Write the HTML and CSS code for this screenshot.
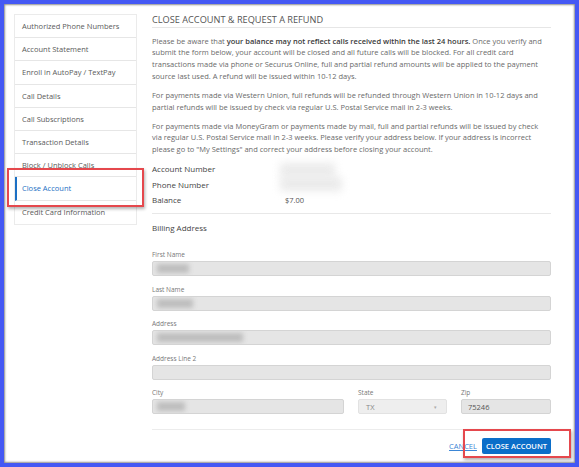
FILE: index.html
```html
<!DOCTYPE html>
<html lang="en">

  <head>
    <meta charset="UTF-8">
    <title>Close Account</title>
    <link rel="stylesheet" href="styles.css">
  </head>

  <body>
    <div class="frame">
      <ul class="side-nav">
        <li>Authorized Phone Numbers</li>
        <li>Account Statement</li>
        <li>Enroll in AutoPay / TextPay</li>
        <li>Call Details</li>
        <li>Call Subscriptions</li>
        <li>Transaction Details</li>
        <li>Block / Unblock Calls</li>
        <li class="active">Close Account</li>
        <li>Credit Card Information</li>
      </ul>

      <div class="main">
        <h1 class="title">CLOSE ACCOUNT &amp; REQUEST A REFUND</h1>

        <p class="note">Please be aware that <b>your balance may not reflect calls received within the last 24 hours.</b> Once you verify and<br>
          submit the form below, your account will be closed and all future calls will be blocked. For all credit card<br>
          transactions made via phone or Securus Online, full and partial refund amounts will be applied to the payment<br>
          source last used. A refund will be issued within 10-12 days.</p>
        <p class="note">For payments made via Western Union, full refunds will be refunded through Western Union in 10-12 days and<br>
          partial refunds will be issued by check via regular U.S. Postal Service mail in 2-3 weeks.</p>
        <p class="note">For payments made via MoneyGram or payments made by mail, full and partial refunds will be issued by check<br>
          via regular U.S. Postal Service mail in 2-3 weeks. Please verify your address below. If your address is incorrect<br>
          please go to "My Settings" and correct your address before closing your account.</p>

        <div class="info">
          <div class="info-row"><span class="info-label">Account Number</span><span class="smudge smudge-account"></span></div>
          <div class="info-row"><span class="info-label">Phone Number</span><span class="smudge smudge-phone"></span></div>
          <div class="info-row"><span class="info-label">Balance</span><span class="info-value">$7.00</span></div>
        </div>

        <h2 class="section">Billing Address</h2>

        <div class="field">
          <label>First Name</label>
          <div class="input"><span class="blur" style="width: 32px"></span></div>
        </div>
        <div class="field">
          <label>Last Name</label>
          <div class="input"><span class="blur" style="width: 36px"></span></div>
        </div>
        <div class="field">
          <label>Address</label>
          <div class="input"><span class="blur" style="width: 86px"></span></div>
        </div>
        <div class="field">
          <label>Address Line 2</label>
          <div class="input"></div>
        </div>
        <div class="field-row">
          <div class="field">
            <label>City</label>
            <div class="input"><span class="blur" style="width: 28px"></span></div>
          </div>
          <div class="field">
            <label>State</label>
            <div class="input select">TX<span class="caret">&#9662;</span></div>
          </div>
          <div class="field">
            <label>Zip</label>
            <div class="input filled">75246</div>
          </div>
        </div>

        <div class="actions">
          <a class="cancel" href="#">CANCEL</a>
          <button class="btn-close">CLOSE ACCOUNT</button>
        </div>
      </div>

      <div class="callout callout-nav"></div>
      <div class="callout callout-btn"></div>
    </div>
  </body>

</html>
```

FILE: styles.css
```css
* {
  box-sizing: border-box;
}

body {
  margin: 0;
  background-color: white;
  font-family: "Open Sans", "Noto Sans", sans-serif;
  color: #555;
}

.frame {
  position: relative;
  width: 579px;
  height: 467px;
  border: 4px solid #4458f4;
  box-shadow: inset 0 0 2px 1px rgba(0, 0, 0, 0.45);
  padding: 10px 24px 0 10px;
  display: flex;
  gap: 15px;
  overflow: hidden;
}

/* left menu */

.side-nav {
  list-style: none;
  margin: 0;
  padding: 0;
  width: 123px;
  flex: none;
  align-self: flex-start;
  border: 1px solid #ebebeb;
}

.side-nav li {
  height: 23.2px;
  line-height: 22px;
  padding-left: 7px;
  font-size: 7.5px;
  color: #5a5a5a;
  border-bottom: 1px solid #e6e6e6;
  white-space: nowrap;
}

.side-nav li:last-child {
  border-bottom: none;
}

.side-nav li.active {
  color: #1c70c4;
  border-left: 2px solid #1c70c4;
  padding-left: 5px;
}

/* main column */

.main {
  flex: 1;
  min-width: 0;
}

.title {
  margin: 0;
  font-size: 9.2px;
  font-weight: 400;
  line-height: 12px;
  color: #555;
  padding-bottom: 1px;
  border-bottom: 1px solid #e6e6e6;
}

.note {
  margin: 7.5px 0 0;
  font-size: 7.5px;
  line-height: 11.7px;
  color: #6a6a6a;
  white-space: nowrap;
}

.note b {
  color: #3a3a3a;
  font-weight: 600;
}

.info {
  margin-top: 5px;
  padding-bottom: 6px;
  border-bottom: 1px solid #e8e8e8;
}

.info-row {
  display: flex;
  align-items: center;
  height: 15.5px;
  position: relative;
}

.info-label {
  width: 133px;
  font-size: 8px;
  color: #444;
}

.info-value {
  font-size: 7.5px;
  color: #555;
}

.smudge {
  position: absolute;
  left: 128px;
  height: 14px;
  background-color: #e2e2e2;
  filter: blur(4px);
  opacity: 0.7;
}

.smudge-account {
  width: 55px;
  top: 2px;
}

.smudge-phone {
  width: 62px;
  top: 1px;
}

.section {
  margin: 8px 0 16px;
  font-size: 8px;
  font-weight: 400;
  line-height: 12px;
  color: #444;
}

/* form */

.field {
  margin-bottom: 8.5px;
}

.field label {
  display: block;
  font-size: 6.5px;
  line-height: 10px;
  color: #777;
  margin-bottom: 1px;
}

.input {
  height: 15px;
  background-color: #e5e5e5;
  border: 1px solid #d4d4d4;
  border-radius: 2px;
  padding-left: 4px;
  display: flex;
  align-items: center;
  font-size: 7.5px;
  color: #555;
  overflow: hidden;
}

.blur {
  height: 9px;
  background-color: #bdbdbd;
  filter: blur(2.5px);
}

.select {
  background-color: #eeeeee;
  border-color: #e2e2e2;
  padding-left: 7px;
  color: #888;
  justify-content: space-between;
  padding-right: 9px;
}

.caret {
  font-size: 5px;
  color: #aaa;
}

.filled {
  padding-left: 6px;
  color: #555;
}

.field-row {
  display: grid;
  grid-template-columns: 192px 89px 1fr;
  gap: 14px;
}

.field-row .field {
  margin-bottom: 0;
}

.actions {
  margin-top: 15px;
  border-top: 1px solid #ececec;
  padding-top: 8px;
  display: flex;
  justify-content: flex-end;
  align-items: center;
  gap: 5px;
}

.cancel {
  font-size: 7.5px;
  color: #3b86d6;
  text-decoration: underline;
}

.btn-close {
  height: 16px;
  padding: 0 4px;
  border: none;
  border-radius: 2px;
  background-color: #0b6ec9;
  color: white;
  font-family: inherit;
  font-size: 7.5px;
  font-weight: 600;
  white-space: nowrap;
}

/* red annotation boxes */

.callout {
  position: absolute;
  border: 2px solid #e5484d;
  box-shadow: 1px 2px 3px rgba(0, 0, 0, 0.3);
}

.callout-nav {
  left: 3px;
  top: 164px;
  width: 137px;
  height: 39px;
}

.callout-btn {
  left: 459px;
  top: 425px;
  width: 108px;
  height: 29px;
}
```
